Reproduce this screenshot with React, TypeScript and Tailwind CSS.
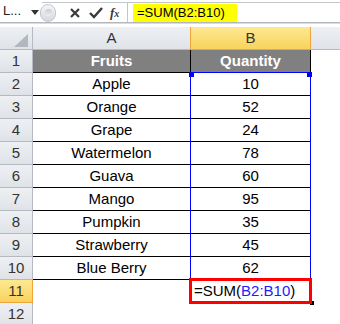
const rows = [
  { a: "Fruits", b: "Quantity", head: true },
  { a: "Apple", b: "10" },
  { a: "Orange", b: "52" },
  { a: "Grape", b: "24" },
  { a: "Watermelon", b: "78" },
  { a: "Guava", b: "60" },
  { a: "Mango", b: "95" },
  { a: "Pumpkin", b: "35" },
  { a: "Strawberry", b: "45" },
  { a: "Blue Berry", b: "62" },
];

const hdr = "bg-gradient-to-b from-[#eef0f3] to-[#dfe3e8] border-[#b5bac2]";
const hot = "bg-gradient-to-b from-[#fde890] to-[#f9d35c] border-[#f0a43c]";

export default function App() {
  return (
    <div className="relative w-[340px] h-[324px] overflow-hidden bg-white text-[15px] text-black font-['Liberation_Sans',Arial,sans-serif]">
      {/* formula bar */}
      <div className="flex h-[23px] border-b border-[#b4b8be]">
        <div className="w-[42px] flex items-center pl-[3px] text-[13px] text-[#222]">
          <span>L...</span>
          <svg width="8" height="5" className="ml-[10px] mt-[2px]" viewBox="0 0 8 5">
            <path d="M0 0h8L4 5z" fill="#333" />
          </svg>
        </div>
        <div className="w-[85px] flex items-center border-t border-[#c3c6cb] mt-[2px]">
          <div className="w-[16px] h-[18px] rounded-full bg-gradient-to-b from-[#f4f5f6] to-[#d6d9dd] border border-[#c3c6cb] flex items-center justify-center -ml-[2px]">
            <div className="w-[7px] h-[7px] rounded-full bg-gradient-to-b from-[#c9ccd0] to-[#eceef0]" />
          </div>
          <svg width="12" height="12" viewBox="0 0 12 12" className="ml-[13px]">
            <path d="M2 2l8 8M10 2l-8 8" stroke="#3a3a3a" strokeWidth="2.2" />
          </svg>
          <svg width="14" height="12" viewBox="0 0 14 12" className="ml-[8px]">
            <path d="M1 6l4 4 8-9" stroke="#3a3a3a" strokeWidth="2.4" fill="none" />
          </svg>
          <span className="ml-[7px] text-[13px] italic font-bold text-[#3a3a3a] font-['Liberation_Serif',serif]">
            f<span className="text-[10px]">x</span>
          </span>
        </div>
        <div className="flex-1 flex items-center border-l border-t border-[#c3c6cb] mt-[2px] pl-[5px]">
          <div className="h-[18px] w-[104px] bg-[#ffff00] flex items-center pl-[4px] text-[13px]">=SUM(B2:B10)</div>
        </div>
      </div>
      <div className="h-[4px] border-t border-[#d8dbe0]" />

      {/* column headers */}
      <div className="flex h-[23px]">
        <div className={`w-[33px] border-r border-b ${hdr} relative`}>
          <svg width="14" height="13" viewBox="0 0 14 13" className="absolute right-[4px] bottom-[2px]">
            <path d="M14 0V13H0z" fill="#b3b8bf" />
          </svg>
        </div>
        <div className={`w-[157px] border-b ${hdr} flex items-center justify-center text-[#333]`}>A</div>
        <div className={`w-[121px] border-x border-b ${hot} flex items-center justify-center text-[#333]`}>B</div>
        <div className={`flex-1 border-b ${hdr}`} />
      </div>

      {rows.map((r, i) => (
        <div key={i} className="flex h-[23px]">
          <div className={`w-[33px] border-r border-b ${hdr} flex items-center justify-center text-[#333]`}>{i + 1}</div>
          <div
            className={`w-[158px] border-b border-r border-black flex items-center justify-center ${
              r.head ? "bg-[#808080] text-white font-bold" : ""
            }`}
          >
            {r.a}
          </div>
          <div
            className={`w-[120px] border-b border-r border-black flex items-center justify-center ${
              r.head ? "bg-[#808080] text-white font-bold" : ""
            }`}
          >
            {r.b}
          </div>
        </div>
      ))}

      <div className="flex h-[23px]">
        <div className={`w-[33px] border-r border-b ${hot} flex items-center justify-center text-[#333]`}>11</div>
      </div>
      <div className="flex h-[23px]">
        <div className={`w-[33px] border-r border-b ${hdr} flex items-center justify-center text-[#333]`}>12</div>
      </div>

      {/* selection of B2:B10 */}
      <div className="absolute left-[190px] top-[72px] w-[121px] h-[207px] border border-[#0000ff]" />
      <div className="absolute left-[189px] top-[72px] w-[5px] h-[5px] bg-[#0000ff]" />
      <div className="absolute left-[307px] top-[72px] w-[5px] h-[5px] bg-[#0000ff]" />

      {/* active cell B11 */}
      <div className="absolute left-[310px] top-[301px] w-[4px] h-[4px] bg-black" />
      <div className="absolute left-[189px] top-[278px] w-[123px] h-[26px] border-[3px] border-[#ff0000] flex items-center pl-[2px]">
        =SUM(<span className="text-[#2020ff]">B2:B10</span>)
      </div>
    </div>
  );
}
